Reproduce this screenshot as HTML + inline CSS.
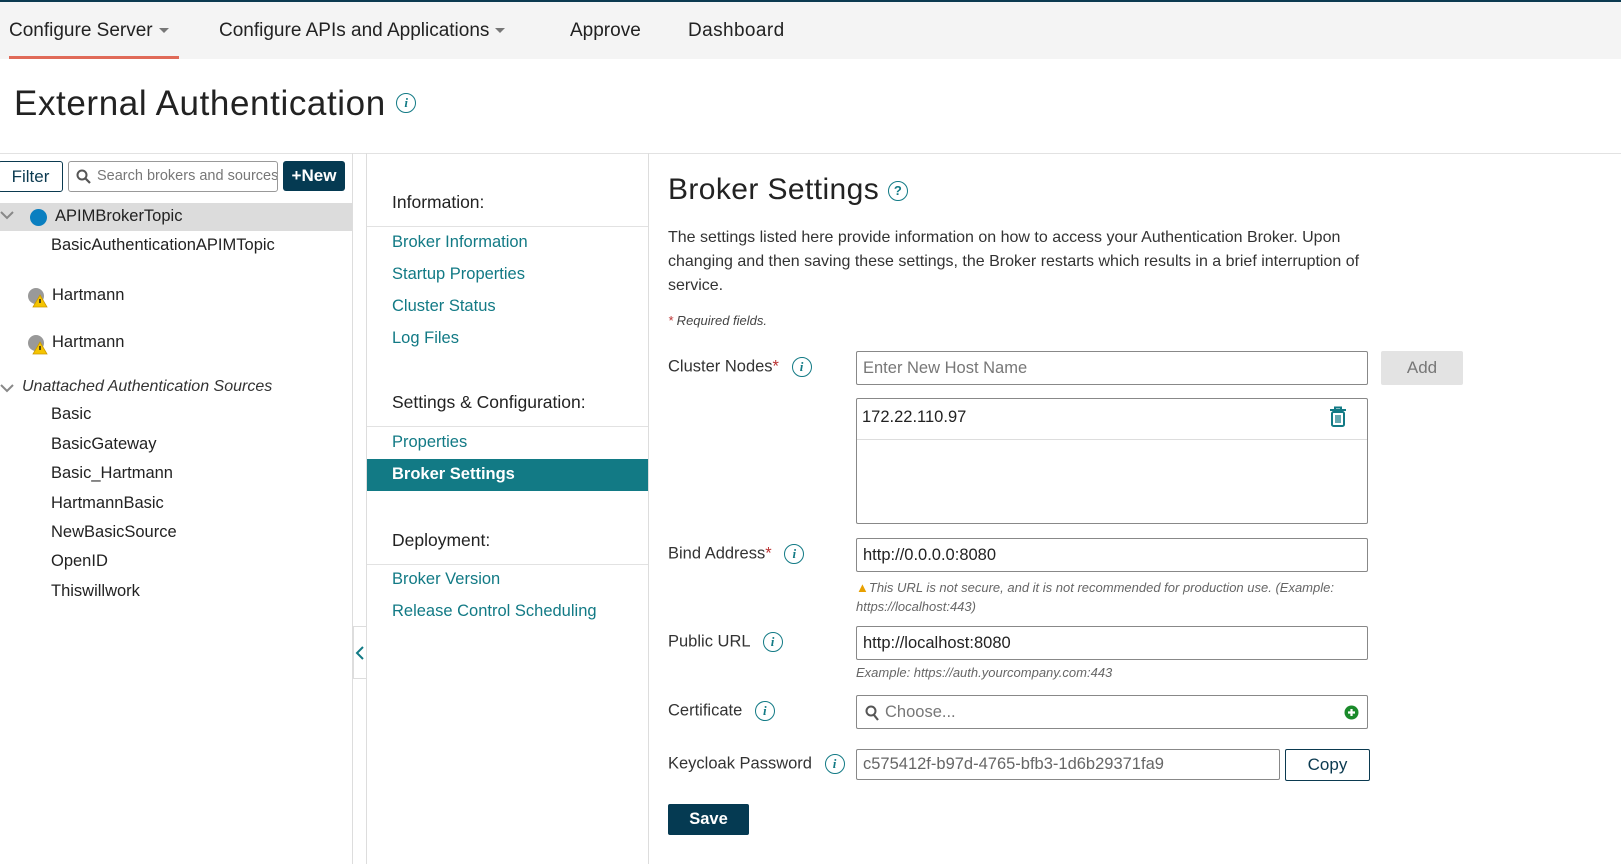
<!DOCTYPE html>
<html><head><meta charset="utf-8"><style>
*{box-sizing:border-box;margin:0;padding:0}
body{width:1621px;height:864px;position:relative;overflow:hidden;background:#fff;font-family:"Liberation Sans",sans-serif;color:#222}
.a{position:absolute;white-space:nowrap}
.nav{position:absolute;left:0;top:0;width:1621px;height:59px;background:#f4f4f4;border-top:2px solid #0b3a50}
.nav .a{font-size:19px;color:#222;top:18px}
.car{display:inline-block;width:0;height:0;border-left:5px solid transparent;border-right:5px solid transparent;border-top:5px solid #777;vertical-align:middle;margin-left:6px}
.lnk{font-size:16.5px;color:#127a85;left:392px}
.hd{font-size:17.5px;color:#222;left:392px}
.hr{position:absolute;height:1px;background:#e2e2e2}
.lbl{font-size:16.5px;color:#333;left:668px}
.inp{position:absolute;border:1px solid #888;border-radius:2px;background:#fff;font-size:16.5px;padding-left:6px;display:flex;align-items:center}
.ic{display:inline-block;width:20px;height:20px;border:1.5px solid #127a85;border-radius:50%;color:#127a85;font:italic bold 13px "Liberation Serif",serif;text-align:center;line-height:17px;vertical-align:middle}
.tree{font-size:16.5px;left:51px}
.note{font-size:13px;font-style:italic;color:#666;left:856px}
</style></head><body>
<div class="nav">
<div class="a" style="left:9px">Configure Server<span class="car"></span></div>
<div class="a" style="left:219px">Configure APIs and Applications<span class="car"></span></div>
<div class="a" style="left:570px">Approve</div>
<div class="a" style="left:688px;letter-spacing:0.4px">Dashboard</div>
<div style="position:absolute;left:9px;top:54px;width:170px;height:3px;background:#e06a58"></div>
</div>
<div class="a" style="left:14px;top:84px;font-size:35px;letter-spacing:0.6px;color:#222">External Authentication <span class="ic" style="width:20px;height:20px;margin-top:-6px;letter-spacing:0">i</span></div>
<div class="hr" style="left:0;top:153px;width:1621px"></div>
<div style="position:absolute;left:352px;top:153px;width:1px;height:711px;background:#ddd"></div>
<div class="a" style="left:-2px;top:161px;width:65px;height:31px;border:1px solid #0b3a50;border-radius:3px;font-size:17px;text-align:center;line-height:29px;color:#0b3a50">Filter</div>
<div class="a" style="left:68px;top:161px;width:210px;height:31px;border:1px solid #999;border-radius:3px;font-size:14.5px;color:#777;line-height:29px;padding-left:28px;overflow:hidden">Search brokers and sources
<svg style="position:absolute;left:7px;top:7px" width="15" height="15" viewBox="0 0 15 15"><circle cx="6" cy="6" r="4.5" fill="none" stroke="#555" stroke-width="2"/><path d="M9.5 9.5L14 14" stroke="#555" stroke-width="2.2"/></svg></div>
<div class="a" style="left:283px;top:161px;width:62px;height:30px;background:#053a52;border-radius:3px;color:#fff;font-size:17px;font-weight:bold;text-align:center;line-height:30px">+New</div>
<div style="position:absolute;left:0;top:203px;width:352px;height:28px;background:#dcdcdc"></div>
<svg class="a" style="left:0;top:211px" width="14" height="10"><path d="M1 1l6 6 6-6" fill="none" stroke="#888" stroke-width="2"/></svg>
<div class="a" style="left:30px;top:209px;width:17px;height:17px;border-radius:50%;background:#0a7fc0"></div>
<div class="a tree" style="left:55px;top:207px">APIMBrokerTopic</div>
<div class="a tree" style="top:236px">BasicAuthenticationAPIMTopic</div>
<svg class="a" style="left:27px;top:287px" width="22" height="22"><circle cx="9" cy="9" r="8" fill="#999"/><path d="M13 8l7 12h-14z" fill="#f5c400" stroke="#c90" stroke-width=".8"/><path d="M13 12v4" stroke="#222" stroke-width="1.5"/></svg>
<div class="a tree" style="left:52px;top:286px">Hartmann</div>
<svg class="a" style="left:27px;top:334px" width="22" height="22"><circle cx="9" cy="9" r="8" fill="#999"/><path d="M13 8l7 12h-14z" fill="#f5c400" stroke="#c90" stroke-width=".8"/><path d="M13 12v4" stroke="#222" stroke-width="1.5"/></svg>
<div class="a tree" style="left:52px;top:333px">Hartmann</div>
<svg class="a" style="left:0;top:384px" width="14" height="10"><path d="M1 1l6 6 6-6" fill="none" stroke="#888" stroke-width="2"/></svg>
<div class="a" style="left:22px;top:378px;font-size:16px;font-style:italic;color:#333">Unattached Authentication Sources</div>
<div class="a tree" style="top:405px">Basic</div>
<div class="a tree" style="top:435px">BasicGateway</div>
<div class="a tree" style="top:464px">Basic_Hartmann</div>
<div class="a tree" style="top:494px">HartmannBasic</div>
<div class="a tree" style="top:523px">NewBasicSource</div>
<div class="a tree" style="top:552px">OpenID</div>
<div class="a tree" style="top:582px">Thiswillwork</div>
<div class="a" style="left:353px;top:626px;width:14px;height:53px;border:1px solid #ddd;background:#fff"></div>
<svg class="a" style="left:355px;top:645px" width="10" height="16"><path d="M8 2l-6 6 6 6" fill="none" stroke="#127a85" stroke-width="2"/></svg>
<div style="position:absolute;left:366px;top:153px;width:1px;height:711px;background:#ddd"></div>
<div style="position:absolute;left:648px;top:153px;width:1px;height:711px;background:#ddd"></div>
<div class="a hd" style="top:192px">Information:</div>
<div class="hr" style="left:367px;top:226px;width:281px"></div>
<div class="a lnk" style="top:233px">Broker Information</div>
<div class="a lnk" style="top:265px">Startup Properties</div>
<div class="a lnk" style="top:297px">Cluster Status</div>
<div class="a lnk" style="top:329px">Log Files</div>
<div class="a hd" style="top:392px">Settings &amp; Configuration:</div>
<div class="hr" style="left:367px;top:426px;width:281px"></div>
<div class="a lnk" style="top:433px">Properties</div>
<div style="position:absolute;left:367px;top:459px;width:281px;height:32px;background:#127a85"></div>
<div class="a lnk" style="top:465px;color:#fff;font-weight:bold">Broker Settings</div>
<div class="a hd" style="top:530px">Deployment:</div>
<div class="hr" style="left:367px;top:564px;width:281px"></div>
<div class="a lnk" style="top:570px">Broker Version</div>
<div class="a lnk" style="top:602px">Release Control Scheduling</div>
<div class="a" style="left:668px;top:173px;font-size:30px;letter-spacing:0.4px;color:#222">Broker Settings <span class="ic" style="font-style:normal;font-family:'Liberation Sans';font-size:13px;letter-spacing:0">?</span></div>
<div class="a" style="left:668px;top:226px;font-size:16px;line-height:24px;color:#333;white-space:normal;width:726px">The settings listed here provide information on how to access your Authentication Broker. Upon changing and then saving these settings, the Broker restarts which results in a brief interruption of service.</div>
<div class="a" style="left:668px;top:313px;font-size:13px;font-style:italic;color:#444"><span style="color:#b33">*</span> Required fields.</div>
<div class="a lbl" style="top:357px">Cluster Nodes<span style="color:#b33">*</span> <span class="ic" style="margin-left:8px">i</span></div>
<div class="inp" style="left:856px;top:351px;width:512px;height:34px;color:#777">Enter New Host Name</div>
<div class="a" style="left:1381px;top:351px;width:82px;height:34px;background:#e3e3e3;border-radius:2px;color:#777;font-size:17px;text-align:center;line-height:34px">Add</div>
<div style="position:absolute;left:856px;top:398px;width:512px;height:126px;border:1px solid #888;border-radius:2px"></div>
<div class="hr" style="left:857px;top:439px;width:510px;background:#ddd"></div>
<div class="a" style="left:862px;top:408px;font-size:16.5px">172.22.110.97</div>
<svg class="a" style="left:1329px;top:406px" width="18" height="22" viewBox="0 0 18 22"><path d="M1 4h16M6 4V1.5h6V4" fill="none" stroke="#127a85" stroke-width="2"/><rect x="3" y="6" width="12" height="14" rx="1.5" fill="none" stroke="#127a85" stroke-width="2"/><path d="M7 9v8M9 9v8M11 9v8" stroke="#127a85" stroke-width="1.3"/></svg>
<div class="a lbl" style="top:544px">Bind Address<span style="color:#b33">*</span> <span class="ic" style="margin-left:8px">i</span></div>
<div class="inp" style="left:856px;top:538px;width:512px;height:34px">http://0.0.0.0:8080</div>
<div class="a note" style="top:578px;line-height:19px;white-space:normal;width:520px"><span style="color:#e8a000;font-style:normal">▲</span>This URL is not secure, and it is not recommended for production use. (Example: https://localhost:443)</div>
<div class="a lbl" style="top:632px">Public URL <span class="ic" style="margin-left:8px">i</span></div>
<div class="inp" style="left:856px;top:626px;width:512px;height:34px">http://localhost:8080</div>
<div class="a note" style="top:665px">Example: https://auth.yourcompany.com:443</div>
<div class="a lbl" style="top:701px">Certificate <span class="ic" style="margin-left:8px">i</span></div>
<div class="inp" style="left:856px;top:695px;width:512px;height:34px;color:#777;padding-left:28px">Choose...
<svg style="position:absolute;left:8px;top:9px" width="15" height="16"><circle cx="6" cy="6" r="4.5" fill="none" stroke="#555" stroke-width="2"/><path d="M9 10l4 5" stroke="#555" stroke-width="2.2"/></svg>
<svg style="position:absolute;right:8px;top:9px" width="15" height="15"><circle cx="7.5" cy="7.5" r="7" fill="#1a8a2a"/><path d="M7.5 4v7M4 7.5h7" stroke="#fff" stroke-width="2.2"/></svg></div>
<div class="a lbl" style="top:754px">Keycloak Password <span class="ic" style="margin-left:8px">i</span></div>
<div class="inp" style="left:856px;top:749px;width:424px;height:31px;color:#666">c575412f-b97d-4765-bfb3-1d6b29371fa9</div>
<div class="a" style="left:1285px;top:749px;width:85px;height:32px;border:1px solid #0b3a50;border-radius:2px;color:#0b3a50;font-size:17px;text-align:center;line-height:30px">Copy</div>
<div class="a" style="left:668px;top:804px;width:81px;height:31px;background:#053a52;border-radius:2px;color:#fff;font-size:16.5px;font-weight:bold;text-align:center;line-height:31px">Save</div>
</body></html>
